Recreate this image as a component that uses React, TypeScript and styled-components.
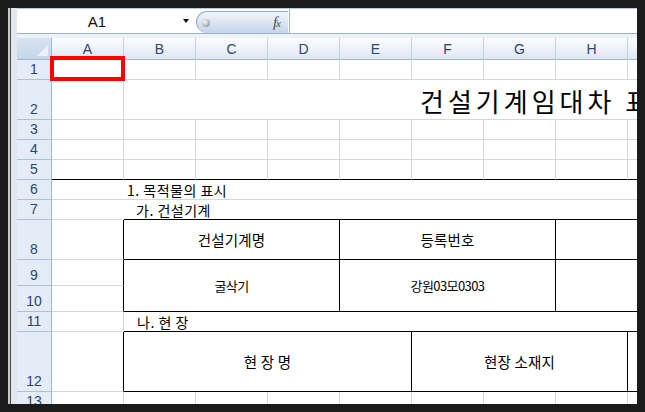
import React from "react";
import styled, { createGlobalStyle, css } from "styled-components";

type Line = "grid" | "black" | "none";
type Kind = "label" | "head" | "value" | "title";

interface CellDef {
  col: number;
  span?: number;
  rows?: number;
  text?: string;
  kind?: Kind;
  indent?: number;
  right?: Line;
  bottom?: Line;
  selected?: boolean;
}

interface RowDef {
  n: number;
  h: number;
  cells: CellDef[];
  rule?: number; // black bottom line from this column on
}

const COLS = ["A", "B", "C", "D", "E", "F", "G", "H", "I"];

const ROWS: RowDef[] = [
  { n: 1, h: 20, cells: [{ col: 1, selected: true }] },
  {
    n: 2,
    h: 40,
    cells: [{ col: 2, span: 8, text: "건설기계임대차 표준계약서", kind: "title", right: "none" }],
  },
  { n: 3, h: 20, cells: [] },
  { n: 4, h: 20, cells: [] },
  { n: 5, h: 20, cells: [], rule: 1 },
  {
    n: 6,
    h: 20,
    cells: [
      { col: 1, right: "none" },
      { col: 2, span: 8, text: "1. 목적물의 표시", kind: "label", indent: 3, right: "none" },
    ],
  },
  {
    n: 7,
    h: 20,
    rule: 2,
    cells: [
      { col: 1, right: "none" },
      { col: 2, span: 8, text: "가. 건설기계", kind: "label", indent: 12, right: "none" },
    ],
  },
  {
    n: 8,
    h: 40,
    cells: [
      { col: 1, right: "black" },
      { col: 2, span: 3, text: "건설기계명", kind: "head", right: "black", bottom: "black" },
      { col: 5, span: 3, text: "등록번호", kind: "head", right: "black", bottom: "black" },
      { col: 8, span: 2, right: "none", bottom: "black" },
    ],
  },
  {
    n: 9,
    h: 26,
    cells: [
      { col: 1, right: "black" },
      { col: 2, span: 3, rows: 2, text: "굴삭기", kind: "value", right: "black", bottom: "black" },
      { col: 5, span: 3, rows: 2, text: "강원03모0303", kind: "value", right: "black", bottom: "black" },
      { col: 8, span: 2, rows: 2, right: "none", bottom: "black" },
    ],
  },
  { n: 10, h: 26, cells: [{ col: 1, right: "black" }] },
  {
    n: 11,
    h: 20,
    cells: [
      { col: 2, span: 8, text: "나. 현 장", kind: "label", indent: 13, right: "none", bottom: "black" },
    ],
  },
  {
    n: 12,
    h: 60,
    cells: [
      { col: 1, right: "black" },
      { col: 2, span: 4, text: "현 장 명", kind: "head", right: "black", bottom: "black" },
      { col: 6, span: 3, text: "현장 소재지", kind: "head", right: "black", bottom: "black" },
      { col: 9, bottom: "black" },
    ],
  },
  { n: 13, h: 20, cells: [] },
];

const App = () => {
  const taken = new Set<string>();
  const items: React.ReactElement[] = [];

  ROWS.forEach((row, i) => {
    const r = i + 2;
    items.push(
      <RowHead key={`rh${row.n}`} $row={r}>
        {row.n}
      </RowHead>
    );

    const defs: CellDef[] = [];
    row.cells.forEach((d) => {
      defs.push(d);
      for (let y = 0; y < (d.rows ?? 1); y++)
        for (let x = 0; x < (d.span ?? 1); x++) taken.add(`${row.n + y}:${d.col + x}`);
    });
    COLS.forEach((_, c) => {
      const key = `${row.n}:${c + 1}`;
      if (!taken.has(key)) {
        taken.add(key);
        defs.push({ col: c + 1 });
      }
    });

    defs.forEach((d) => {
      const bottom: Line = d.bottom ?? (row.rule && d.col >= row.rule ? "black" : "grid");
      items.push(
        <Cell
          key={`${row.n}-${d.col}`}
          $row={r}
          $col={d.col + 1}
          $span={d.span ?? 1}
          $rows={d.rows ?? 1}
          $right={d.right ?? "grid"}
          $bottom={bottom}
          $kind={d.kind ?? "label"}
          $indent={d.indent ?? 0}
        >
          {d.text}
          {d.selected && <Selection />}
        </Cell>
      );
    });
  });

  return (
    <>
      <GlobalStyle />
      <Screen>
        <Window>
          <SideFrame />
          <Main>
            <FormulaBar>
              <NameBox>
                <NameText>A1</NameText>
                <DropArrow />
              </NameBox>
              <FxPill>
                <Knob />
                <Fx>
                  f<small>x</small>
                </Fx>
              </FxPill>
              <FormulaInput />
            </FormulaBar>
            <HeaderGap />
            <Sheet $template={ROWS.map((r) => `${r.h}px`).join(" ")}>
              <Corner />
              {COLS.map((c) => (
                <ColHead key={c}>{c}</ColHead>
              ))}
              {items}
            </Sheet>
          </Main>
        </Window>
      </Screen>
    </>
  );
};

export default App;

const GlobalStyle = createGlobalStyle`
  html, body {
    margin: 0;
    padding: 0;
    background: #1b1b1b;
  }
  * {
    box-sizing: border-box;
  }
`;

const Screen = styled.div`
  width: 645px;
  height: 412px;
  padding: 8px;
  background: #1b1b1b;
  display: flex;
`;

const Window = styled.div`
  flex: 1;
  display: flex;
  overflow: hidden;
  background: #fff;
`;

const SideFrame = styled.div`
  width: 9px;
  flex: none;
  background: #e3e6ea;
  border-left: 2px solid #c8c8c8;
  box-shadow: inset 1px 0 0 #4b4b4b;
`;

const Main = styled.div`
  flex: 1;
  min-width: 0;
  display: flex;
  flex-direction: column;
  overflow: hidden;
`;

const FormulaBar = styled.div`
  height: 26px;
  flex: none;
  display: flex;
  padding-left: 1px;
  background: #fff;
  border-top: 1px solid #b8c9dd;
  border-bottom: 1px solid #9db1ca;
`;

const NameBox = styled.div`
  width: 178px;
  flex: none;
  display: flex;
  align-items: center;
  font: 15px "Liberation Sans", Arial, sans-serif;
  color: #111;
`;

const NameText = styled.span`
  width: 158px;
  text-align: center;
`;

const DropArrow = styled.span`
  margin-left: 7px;
  width: 0;
  height: 0;
  border-left: 3px solid transparent;
  border-right: 3px solid transparent;
  border-top: 4px solid #111;
`;

const FxPill = styled.div`
  width: 92px;
  flex: none;
  margin-top: 2px;
  display: flex;
  align-items: center;
  justify-content: space-between;
  padding: 0 8px 0 5px;
  border: 1px solid #94abc9;
  border-right: none;
  border-bottom: none;
  border-radius: 12px 0 0 12px;
  background: linear-gradient(to bottom, #f3f6fb, #d8e3f1 55%, #c3d4ea);
`;

const Knob = styled.span`
  width: 8px;
  height: 8px;
  border-radius: 50%;
  background: radial-gradient(circle at 35% 35%, #fbfbfb, #8e949c 85%);
`;

const Fx = styled.span`
  font: italic 15px "Liberation Serif", "Times New Roman", serif;
  color: #454c58;
  letter-spacing: -1px;

  small {
    font-size: 11px;
  }
`;

const FormulaInput = styled.div`
  flex: 1;
  margin-left: 1px;
  border-left: 1px solid #9db1ca;
  background: #fff;
`;

const HeaderGap = styled.div`
  height: 4px;
  flex: none;
  background: #edf2f8;
`;

const Sheet = styled.div<{ $template: string }>`
  display: grid;
  grid-template-columns: 35px repeat(9, 72px);
  grid-template-rows: 22px ${({ $template }) => $template};
  background: #fff;
`;

const headFont = css`
  font: 14px "Liberation Sans", Arial, sans-serif;
  color: #2f466a;
`;

const Corner = styled.div`
  grid-row: 1;
  grid-column: 1;
  position: relative;
  background: linear-gradient(to bottom, #d7e3f1, #c5d6ea);
  border-right: 1px solid #9eb6ce;
  border-bottom: 1px solid #9eb6ce;

  &::after {
    content: "";
    position: absolute;
    right: 3px;
    bottom: 3px;
    width: 11px;
    height: 11px;
    background: #eef2f8;
    clip-path: polygon(100% 0, 100% 100%, 0 100%);
  }
`;

const ColHead = styled.div`
  ${headFont};
  grid-row: 1;
  display: flex;
  align-items: center;
  justify-content: center;
  padding-top: 1px;
  background: linear-gradient(to bottom, #fafbfd 0%, #f0f4f9 45%, #dce6f2 100%);
  border-right: 1px solid #c3d1e2;
  border-bottom: 1px solid #9eb6ce;
`;

const RowHead = styled.div<{ $row: number }>`
  ${headFont};
  grid-row: ${({ $row }) => $row};
  grid-column: 1;
  display: flex;
  align-items: flex-end;
  justify-content: center;
  line-height: 18px;
  padding-bottom: 1px;
  background: #e4ecf7;
  border-right: 1px solid #9eb6ce;
  border-bottom: 1px solid #aec0d7;
`;

const lineColor = (l: Line) => (l === "black" ? "#000" : l === "none" ? "transparent" : "#d0d7e5");

const kindStyles: Record<Kind, ReturnType<typeof css>> = {
  label: css`
    font-size: 14px;
    letter-spacing: 0.5px;
  `,
  head: css`
    font-size: 14.5px;
    letter-spacing: 0.2px;
    justify-content: center;
  `,
  value: css`
    font-size: 13px;
    letter-spacing: -0.6px;
    justify-content: center;
  `,
  title: css`
    font-size: 26px;
    letter-spacing: 4px;
    padding-top: 1px;
  `,
};

const Cell = styled.div<{
  $row: number;
  $col: number;
  $span: number;
  $rows: number;
  $right: Line;
  $bottom: Line;
  $kind: Kind;
  $indent: number;
}>`
  grid-row: ${({ $row, $rows }) => `${$row} / span ${$rows}`};
  grid-column: ${({ $col, $span }) => `${$col} / span ${$span}`};
  position: relative;
  display: flex;
  align-items: center;
  padding-left: ${({ $indent }) => $indent}px;
  white-space: nowrap;
  font-family: "Noto Sans CJK KR", "Liberation Sans", sans-serif;
  color: #000;
  border-right: 1px solid ${({ $right }) => lineColor($right)};
  border-bottom: 1px solid ${({ $bottom }) => lineColor($bottom)};
  ${({ $kind }) => kindStyles[$kind]};
  ${({ $kind }) =>
    $kind === "title" &&
    css`
      padding-left: 296px;
    `}
`;

const Selection = styled.span`
  position: absolute;
  top: -4px;
  left: -2px;
  right: -2px;
  bottom: -2px;
  border: 4px solid #ff0000;
  z-index: 2;
`;
